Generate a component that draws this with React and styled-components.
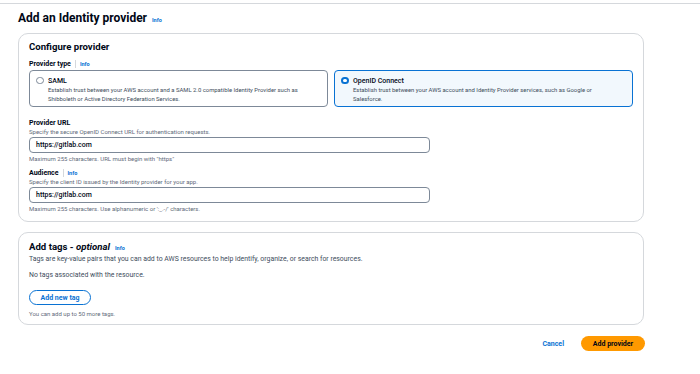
import React from 'react';
import styled, { createGlobalStyle } from 'styled-components';

const GlobalStyle = createGlobalStyle`
	body {
		margin: 0;
		background: #ffffff;
		font-family: Roboto, 'Noto Sans', sans-serif;
		color: #000716;
	}
`;

const Page = styled.div`
	width: 700px;
	height: 371px;
	box-sizing: border-box;
	border-top: 1px solid #d5d8dc;
	margin-top: 3px;
	padding: 6px 56px 0 18px;
	display: flex;
	flex-direction: column;
	overflow: hidden;
`;

const PageTitle = styled.h1`
	margin: 0 0 5px;
	font-size: 12px;
	line-height: 16px;
	font-weight: 700;
	display: flex;
	align-items: baseline;
	gap: 5px;
`;

const InfoLink = styled.a`
	font-size: 5.5px;
	font-weight: 700;
	color: #0972d3;
	text-decoration: none;
`;

const Card = styled.section`
	border: 1px solid #d5d8dc;
	border-radius: 10px;
	padding: ${(p) => p.$pad};
	margin-bottom: ${(p) => p.$gap || '0'};
	display: flex;
	flex-direction: column;
`;

const CardTitle = styled.h2`
	margin: 0;
	font-size: 9.6px;
	line-height: 12px;
	font-weight: 700;
	display: flex;
	align-items: baseline;
	gap: 5px;
	em {
		font-style: italic;
	}
`;

const Label = styled.div`
	margin-top: ${(p) => p.$top || '0'};
	font-size: 7px;
	line-height: 10px;
	font-weight: 700;
	display: flex;
	align-items: center;
	gap: 4px;
`;

const Divider = styled.span`
	width: 1px;
	height: 8px;
	background: #d5d8dc;
`;

const Small = styled.div`
	margin-top: ${(p) => p.$top || '0'};
	font-size: 6px;
	line-height: 8px;
	color: #5f6b7a;
`;

const TileRow = styled.div`
	display: grid;
	grid-template-columns: 1fr 1fr;
	gap: 6px;
	margin-top: 1px;
`;

const Tile = styled.label`
	border: ${(p) => (p.$active ? '1.5px solid #0972d3' : '1.5px solid #7d8998')};
	background: ${(p) => (p.$active ? '#f2f8fd' : '#fff')};
	border-radius: 4px;
	height: 37px;
	box-sizing: border-box;
	padding: 4px 8px 4px 6px;
	display: flex;
	gap: 4.5px;
`;

const Radio = styled.span`
	flex: none;
	width: 7.5px;
	height: 7.5px;
	margin-top: 1.5px;
	border-radius: 50%;
	box-sizing: border-box;
	border: ${(p) => (p.$on ? '2.5px solid #0972d3' : '1px solid #7d8998')};
	background: #fff;
`;

const TileText = styled.div`
	display: flex;
	flex-direction: column;
	padding-top: 1px;
`;

const TileName = styled.div`
	font-size: 7px;
	line-height: 10px;
	font-weight: 500;
`;

const TileDesc = styled.div`
	font-size: 5.9px;
	line-height: 9px;
	color: #414d5c;
	white-space: nowrap;
`;

const Input = styled.div`
	width: 401px;
	height: 16px;
	box-sizing: border-box;
	margin-top: 1px;
	border: 1px solid #7d8998;
	border-radius: 4px;
	padding: 0 6px;
	display: flex;
	align-items: center;
	font-size: 7px;
	font-weight: 500;
	color: #000716;
`;

const Body = styled.div`
	margin-top: ${(p) => p.$top || '0'};
	font-size: 6.9px;
	line-height: 9px;
	color: #414d5c;
`;

const OutlineButton = styled.button`
	align-self: flex-start;
	margin-top: 10px;
	width: 62px;
	height: 15px;
	padding: 0;
	border: 1.5px solid #0972d3;
	border-radius: 10px;
	background: #fff;
	color: #0972d3;
	font-family: inherit;
	font-size: 7px;
	font-weight: 700;
`;

const Footer = styled.div`
	display: flex;
	justify-content: flex-end;
	align-items: center;
	gap: 17px;
	margin-top: 11px;
	margin-right: -1px;
`;

const TextButton = styled.button`
	border: none;
	background: none;
	color: #0972d3;
	font-family: inherit;
	font-size: 7px;
	font-weight: 700;
	padding: 0;
`;

const PrimaryButton = styled.button`
	width: 64px;
	height: 15px;
	padding: 0;
	border: none;
	border-radius: 10px;
	background: #ff9900;
	color: #000716;
	font-family: inherit;
	font-size: 7px;
	font-weight: 700;
`;

export default function App() {
	return (
		<>
			<GlobalStyle />
			<Page>
				<PageTitle>
					Add an Identity provider <InfoLink>Info</InfoLink>
				</PageTitle>

				<Card $pad="7px 10px 8px" $gap="10px">
					<CardTitle>Configure provider</CardTitle>
					<Label $top="6px">
						Provider type <Divider /> <InfoLink>Info</InfoLink>
					</Label>
					<TileRow>
						<Tile>
							<Radio />
							<TileText>
								<TileName>SAML</TileName>
								<TileDesc>
									Establish trust between your AWS account and a SAML 2.0 compatible Identity Provider such as
									<br />
									Shibboleth or Active Directory Federation Services.
								</TileDesc>
							</TileText>
						</Tile>
						<Tile $active>
							<Radio $on />
							<TileText>
								<TileName>OpenID Connect</TileName>
								<TileDesc>
									Establish trust between your AWS account and Identity Provider services, such as Google or
									<br />
									Salesforce.
								</TileDesc>
							</TileText>
						</Tile>
					</TileRow>

					<Label $top="11px">Provider URL</Label>
					<Small>Specify the secure OpenID Connect URL for authentication requests.</Small>
					<Input>https://gitlab.com</Input>
					<Small $top="2px">Maximum 255 characters. URL must begin with "https"</Small>

					<Label $top="5px">
						Audience <Divider /> <InfoLink>Info</InfoLink>
					</Label>
					<Small>Specify the client ID issued by the Identity provider for your app.</Small>
					<Input>https://gitlab.com</Input>
					<Small $top="2px">Maximum 255 characters. Use alphanumeric or '&#58;_.-/' characters.</Small>
				</Card>

				<Card $pad="8px 10px 6px">
					<CardTitle>
						<span>
							Add tags - <em>optional</em>
						</span>
						<InfoLink>Info</InfoLink>
					</CardTitle>
					<Body $top="1px">
						Tags are key-value pairs that you can add to AWS resources to help identify, organize, or search for resources.
					</Body>
					<Body $top="7px">No tags associated with the resource.</Body>
					<OutlineButton>Add new tag</OutlineButton>
					<Small $top="5px">You can add up to 50 more tags.</Small>
				</Card>

				<Footer>
					<TextButton>Cancel</TextButton>
					<PrimaryButton>Add provider</PrimaryButton>
				</Footer>
			</Page>
		</>
	);
}
